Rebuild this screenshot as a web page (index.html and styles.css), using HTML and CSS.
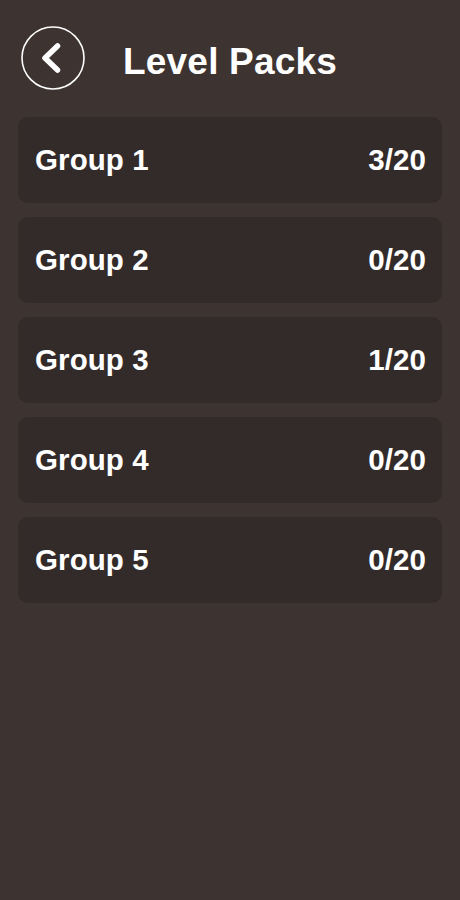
FILE: index.html
```html
<!DOCTYPE html>
<html>
<head>
<meta charset="utf-8">
<link rel="stylesheet" href="styles.css">
</head>
<body>
<div class="screen">
  <header class="header">
    <button class="back" aria-label="Back">
      <svg width="64" height="64" viewBox="0 0 64 64">
        <circle cx="32" cy="32" r="31" fill="none" stroke="#ffffff" stroke-width="1.6"/>
        <path d="M36.5 20 L24 32 L36.5 44" fill="none" stroke="#ffffff" stroke-width="5.5" stroke-linecap="round" stroke-linejoin="round"/>
      </svg>
    </button>
    <h1 class="title">Level Packs</h1>
  </header>
  <main class="list">
    <div class="pack"><span>Group 1</span><span>3/20</span></div>
    <div class="pack"><span>Group 2</span><span>0/20</span></div>
    <div class="pack"><span>Group 3</span><span>1/20</span></div>
    <div class="pack"><span>Group 4</span><span>0/20</span></div>
    <div class="pack"><span>Group 5</span><span>0/20</span></div>
  </main>
</div>
</body>
</html>
```

FILE: styles.css
```css
html, body {
  margin: 0;
  padding: 0;
  background: #3d3331;
}
body {
  font-family: "Liberation Sans", Arial, sans-serif;
  color: #ffffff;
}
.screen {
  width: 460px;
  height: 900px;
  box-sizing: border-box;
  padding: 26px 18px 0 18px;
}
.header {
  display: flex;
  align-items: center;
  height: 64px;
  padding-left: 3px;
}
.back {
  width: 64px;
  height: 64px;
  padding: 0;
  margin: 0;
  border: none;
  background: none;
  display: block;
}
.back svg {
  display: block;
}
.title {
  margin: 0 0 0 38px;
  font-size: 37px;
  font-weight: bold;
  letter-spacing: 0.2px;
  line-height: 1;
  padding-top: 6px;
}
.list {
  margin-top: 27px;
  display: flex;
  flex-direction: column;
  gap: 14px;
}
.pack {
  height: 86px;
  background: #332b2a;
  border-radius: 10px;
  display: flex;
  justify-content: space-between;
  align-items: center;
  padding: 0 16px 0 17px;
  font-size: 29.5px;
  font-weight: bold;
  letter-spacing: 0.1px;
}
```
